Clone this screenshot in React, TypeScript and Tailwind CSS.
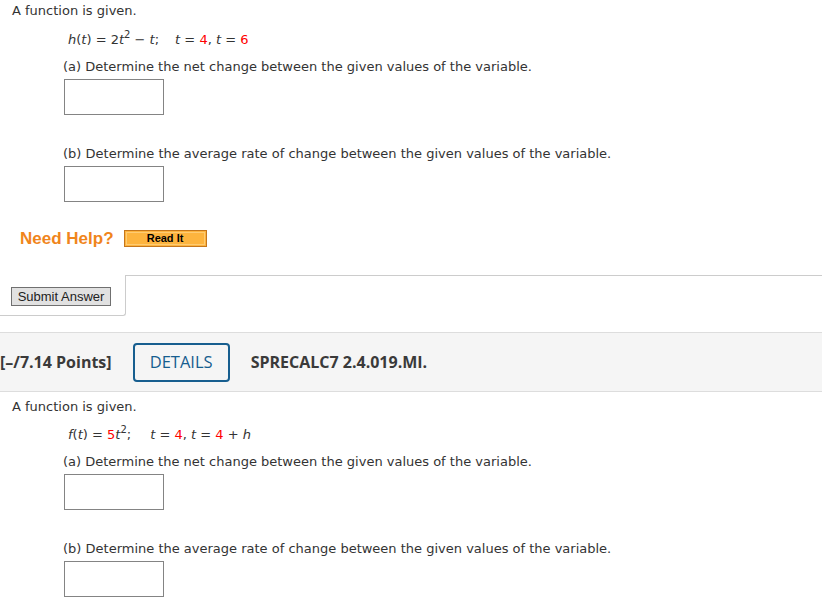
import React from "react";

const Box = ({ className = "" }: { className?: string }) => (
  <div className={`w-[100px] h-[36px] border border-[#848484] bg-white ${className}`} />
);

const Red = ({ children }: { children: React.ReactNode }) => (
  <span className="text-[#ff0000]">{children}</span>
);

const Sq = () => (
  <sup className="text-[10px] leading-none relative -top-[6px] align-baseline">2</sup>
);

export default function App() {
  return (
    <div
      className="w-[822px] h-[610px] bg-white text-[#333333] text-[13px] leading-[16px] overflow-hidden"
      style={{ fontFamily: '"DejaVu Sans", Verdana, sans-serif' }}
    >
      {/* Section 1 */}
      <div className="pl-[12px] pt-[3px]">
        <p>A function is given.</p>
        <div className="pl-[56px] mt-[13px] whitespace-pre">
          <i>h</i>(<i>t</i>) = 2<i>t</i>
          <Sq /> − <i>t</i>;<span className="inline-block w-[16px]" />
          <i>t</i> = <Red>4</Red>, <i>t</i> = <Red>6</Red>
        </div>
        <div className="pl-[51px] mt-[11px]">
          <p>(a) Determine the net change between the given values of the variable.</p>
          <Box className="ml-[1px] mt-[4px]" />
          <p className="mt-[31px]">(b) Determine the average rate of change between the given values of the variable.</p>
          <Box className="ml-[1px] mt-[4px]" />
        </div>
      </div>

      {/* Need help */}
      <div className="flex items-center pl-[20px] mt-[27px] h-[18px]">
        <span
          className="text-[17px] font-bold text-[#f0851c] leading-none"
          style={{ fontFamily: '"Liberation Sans", Arial, sans-serif' }}
        >
          Need Help?
        </span>
        <button
          className="ml-[10px] w-[83px] h-[17px] border border-[#c5761b] bg-[#fdb43e] p-[1px]"
          style={{ fontFamily: '"Liberation Sans", Arial, sans-serif' }}
        >
          <span className="flex items-center justify-center w-full h-full border border-[#fecb73] text-[11px] font-bold text-black leading-none">
            Read It
          </span>
        </button>
      </div>

      {/* Submit frame */}
      <div className="flex mt-[28px]">
        <div className="w-[126px] h-[41px] border-r border-b border-[#cccccc] rounded-br-[3px] pl-[11px] pt-[12px]">
          <button
            className="w-[100px] h-[19px] border border-[#707070] bg-[#e1e1e1] text-[13px] text-[#222] leading-none"
            style={{ fontFamily: '"Liberation Sans", Arial, sans-serif' }}
          >
            Submit Answer
          </button>
        </div>
        <div className="flex-1 border-t border-[#cccccc]" />
      </div>

      {/* Header */}
      <div
        className="mt-[16px] h-[60px] bg-[#f5f5f5] border-y border-[#dddddd] flex items-center text-[#3a3a3a]"
        style={{ fontFamily: '"Open Sans", sans-serif' }}
      >
        <span className="text-[16px] font-bold">[–/7.14 Points]</span>
        <div className="ml-[21px] w-[97px] h-[39px] border-2 border-[#175e8f] rounded-[4px] flex items-center justify-center text-[16.5px] text-[#175e8f]">
          DETAILS
        </div>
        <span className="ml-[21px] text-[16px] font-bold">SPRECALC7 2.4.019.MI.</span>
      </div>

      {/* Section 2 */}
      <div className="pl-[12px] pt-[7px]">
        <p>A function is given.</p>
        <div className="pl-[56px] mt-[12px] whitespace-pre">
          <i>f</i>(<i>t</i>) = <Red>5</Red><i>t</i>
          <Sq />;<span className="inline-block w-[19px]" />
          <i>t</i> = <Red>4</Red>, <i>t</i> = <Red>4</Red> + <i>h</i>
        </div>
        <div className="pl-[51px] mt-[11px]">
          <p>(a) Determine the net change between the given values of the variable.</p>
          <Box className="ml-[1px] mt-[4px]" />
          <p className="mt-[31px]">(b) Determine the average rate of change between the given values of the variable.</p>
          <Box className="ml-[1px] mt-[4px]" />
        </div>
      </div>
    </div>
  );
}
